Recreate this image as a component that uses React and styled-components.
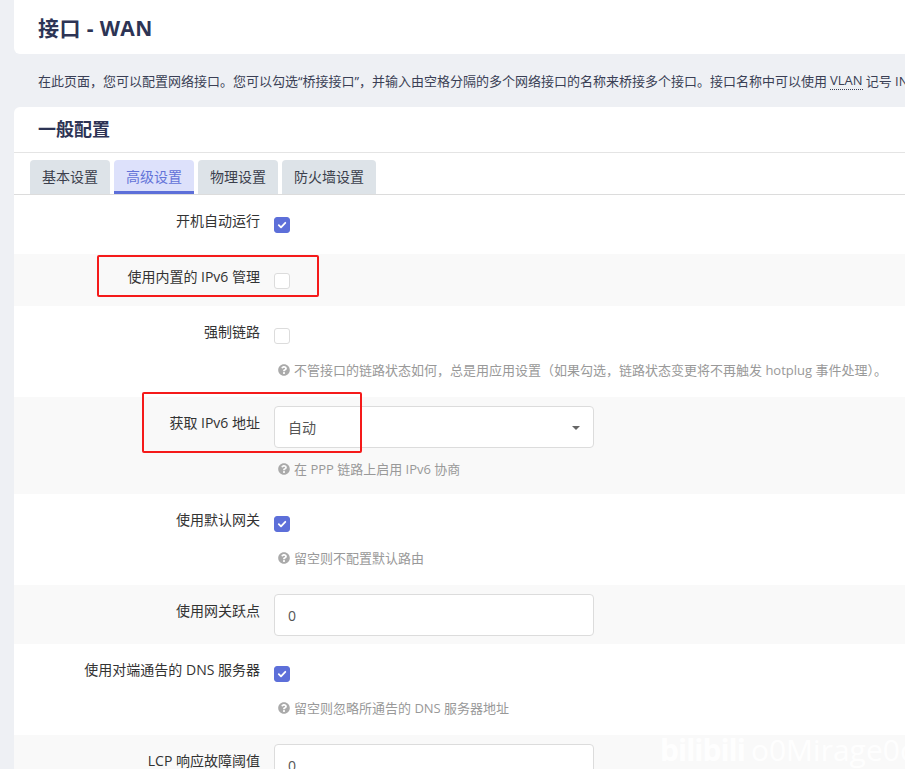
import styled, { createGlobalStyle } from "styled-components";
import { FaQuestionCircle } from "react-icons/fa";

const GlobalStyle = createGlobalStyle`
  html, body {
    margin: 0;
    padding: 0;
    background: #eef0f4;
    overflow: hidden;
  }
  body {
    font-family: "Open Sans", "Noto Sans CJK SC", sans-serif;
    color: #333;
  }
`;

const rows = [
  { label: "开机自动运行", type: "check", checked: true },
  { label: "使用内置的 IPv6 管理", type: "check", checked: false, mark: "small", compact: true },
  {
    label: "强制链路",
    type: "check",
    checked: false,
    help: "不管接口的链路状态如何，总是用应用设置（如果勾选，链路状态变更将不再触发 hotplug 事件处理）。",
  },
  { label: "获取 IPv6 地址", type: "select", value: "自动", help: "在 PPP 链路上启用 IPv6 协商", mark: "big" },
  { label: "使用默认网关", type: "check", checked: true, help: "留空则不配置默认路由" },
  { label: "使用网关跃点", type: "input", value: "0" },
  { label: "使用对端通告的 DNS 服务器", type: "check", checked: true, help: "留空则忽略所通告的 DNS 服务器地址" },
  { label: "LCP 响应故障阈值", type: "input", value: "0" },
];

const tabs = ["基本设置", "高级设置", "物理设置", "防火墙设置"];

function Control({ row }) {
  if (row.type === "check") {
    return (
      <CheckLine>
        <Checkbox $checked={row.checked}>
          {row.checked && (
            <svg width="10" height="10" viewBox="0 0 10 10">
              <path d="M1.8 5.2 L4 7.3 L8.3 2.8" fill="none" stroke="#fff" strokeWidth="1.8" strokeLinecap="round" strokeLinejoin="round" />
            </svg>
          )}
        </Checkbox>
      </CheckLine>
    );
  }
  if (row.type === "select") {
    return (
      <Field>
        {row.value}
        <Caret />
      </Field>
    );
  }
  return <Field>{row.value}</Field>;
}

function App() {
  return (
    <>
      <GlobalStyle />
      <Page>
        <HeaderCard>
          <Title>接口 - WAN</Title>
        </HeaderCard>
        <Description>
          在此页面，您可以配置网络接口。您可以勾选“桥接接口”，并输入由空格分隔的多个网络接口的名称来桥接多个接口。接口名称中可以使用{" "}
          <Abbr>VLAN</Abbr> 记号 INTERFACE.VLANNR（例如：eth0.1）。
        </Description>
        <Card>
          <CardTitle>一般配置</CardTitle>
          <TabBar>
            {tabs.map((t, i) => (
              <Tab key={t} $active={i === 1}>
                {t}
              </Tab>
            ))}
          </TabBar>
          {rows.map((row, i) => (
            <Row key={row.label} $alt={i % 2 === 1} $compact={row.compact}>
              <Label>{row.label}</Label>
              <Value>
                <Control row={row} />
                {row.help && (
                  <Help $afterField={row.type !== "check"}>
                    <FaQuestionCircle size={12} />
                    {row.help}
                  </Help>
                )}
              </Value>
              {row.mark && <Mark $kind={row.mark} />}
            </Row>
          ))}
          <Watermark>
            <Bili>bilibili</Bili>
            o0Mirage0o
          </Watermark>
        </Card>
      </Page>
    </>
  );
}

const Page = styled.div`
  width: 1200px;
  padding-left: 14px;
`;

const HeaderCard = styled.div`
  background: #fff;
  height: 54px;
  border-radius: 0 0 0 6px;
  display: flex;
  align-items: center;
  padding-left: 24px;
`;

const Title = styled.h2`
  margin: 0;
  font-size: 21px;
  font-weight: 700;
  color: #2d3455;
  letter-spacing: 0.4px;
`;

const Description = styled.div`
  height: 53px;
  display: flex;
  align-items: center;
  padding-left: 24px;
  font-size: 13px;
  color: #3a3f55;
  white-space: nowrap;
`;

const Abbr = styled.span`
  border-bottom: 1px dotted #3a3f55;
  margin: 0 3px;
`;

const Card = styled.div`
  position: relative;
  background: #fff;
  border-radius: 6px 0 0 0;
`;

const CardTitle = styled.h3`
  margin: 0;
  height: 42px;
  padding-bottom: 3px;
  display: flex;
  align-items: center;
  padding-left: 24px;
  font-size: 18px;
  font-weight: 700;
  color: #2d3455;
  border-bottom: 1px solid #e4e4e4;
`;

const TabBar = styled.div`
  display: flex;
  gap: 4px;
  padding: 7px 16px 0;
  border-bottom: 1px solid #dcdcdc;
`;

const Tab = styled.div`
  height: 34px;
  box-sizing: border-box;
  padding: 0 12px;
  display: flex;
  align-items: center;
  font-size: 14px;
  border-radius: 4px 4px 0 0;
  background: ${(p) => (p.$active ? "#dde1fb" : "#dde3e8")};
  color: ${(p) => (p.$active ? "#6373d8" : "#3b3f4c")};
  border-bottom: 3px solid ${(p) => (p.$active ? "#5d6fd9" : "transparent")};
`;

const Row = styled.div`
  position: relative;
  display: grid;
  grid-template-columns: 246px 1fr;
  column-gap: 14px;
  padding: ${(p) => (p.$compact ? "6px 0 4px" : "9px 0 8px")};
  background: ${(p) => (p.$alt ? "#f9f9f9" : "#fff")};
`;

const Label = styled.div`
  text-align: right;
  font-size: 14px;
  line-height: 20px;
  padding-top: 7px;
  color: #333;
`;

const Value = styled.div`
  display: flex;
  flex-direction: column;
  align-items: flex-start;
`;

const CheckLine = styled.div`
  height: 42px;
  display: flex;
  align-items: center;
`;

const Checkbox = styled.span`
  width: 16px;
  height: 16px;
  box-sizing: border-box;
  border-radius: 3px;
  display: flex;
  align-items: center;
  justify-content: center;
  background: ${(p) => (p.$checked ? "#5d6fd9" : "#fff")};
  border: 1px solid ${(p) => (p.$checked ? "#5d6fd9" : "#dcdcdc")};
`;

const Field = styled.div`
  position: relative;
  width: 320px;
  height: 42px;
  box-sizing: border-box;
  border: 1px solid #dcdcdc;
  border-radius: 4px;
  background: #fff;
  display: flex;
  align-items: center;
  padding-left: 13px;
  font-size: 14px;
  color: #555;
`;

const Caret = styled.span`
  position: absolute;
  right: 13px;
  top: 19px;
  width: 0;
  height: 0;
  border-left: 4px solid transparent;
  border-right: 4px solid transparent;
  border-top: 4px solid #666;
`;

const Help = styled.div`
  display: flex;
  align-items: center;
  gap: 4px;
  margin: ${(p) => (p.$afterField ? "11px 0 7px 4px" : "3px 0 9px 4px")};
  line-height: 20px;
  font-size: 13px;
  color: #999;
  white-space: nowrap;
  svg {
    color: #aaa;
  }
`;

const Mark = styled.div`
  position: absolute;
  border: 2px solid #f51a1a;
  border-radius: 2px;
  box-sizing: border-box;
  pointer-events: none;
  left: ${(p) => (p.$kind === "small" ? "83px" : "128px")};
  top: ${(p) => (p.$kind === "small" ? "1px" : "-5px")};
  width: ${(p) => (p.$kind === "small" ? "222px" : "220px")};
  height: ${(p) => (p.$kind === "small" ? "42px" : "61px")};
`;

const Watermark = styled.div`
  position: absolute;
  left: 646px;
  top: 622px;
  font-family: "Open Sans", sans-serif;
  font-size: 30px;
  color: rgba(255, 255, 255, 0.95);
  display: flex;
  align-items: baseline;
  gap: 6px;
  white-space: nowrap;
`;

const Bili = styled.span`
  font-weight: 700;
  font-size: 30px;
  letter-spacing: -1px;
`;

export default App;
